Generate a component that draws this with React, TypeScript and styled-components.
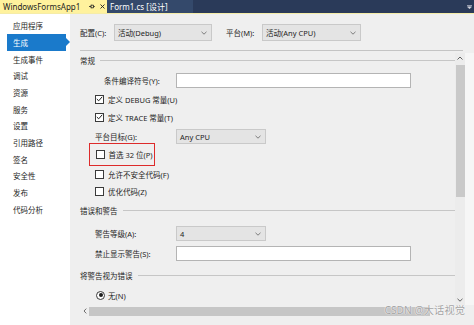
import React from "react";
import styled, { createGlobalStyle } from "styled-components";

const Global = createGlobalStyle`
  html, body { margin: 0; padding: 0; }
  body {
    width: 474px; height: 325px; overflow: hidden;
    font-family: "Noto Sans", "Noto Sans CJK SC", sans-serif;
    font-size: 7.5px; color: #1e1e1e; background: #efefef;
  }
  * { box-sizing: border-box; }
`;

const Window = styled.div`
  width: 474px; height: 325px; display: flex; flex-direction: column; position: relative;
`;

const TabBar = styled.div`
  height: 14px; flex: none; display: flex; align-items: stretch;
  background: #2a3a59; border-bottom: 1px solid #f5eca8;
`;

const Tab = styled.div<{ $active?: boolean; $w: number }>`
  width: ${(p) => p.$w}px; display: flex; align-items: center; padding-left: 3px;
  background: ${(p) => (p.$active ? "#fff29d" : "#34496b")};
  color: ${(p) => (p.$active ? "#1e1e1e" : "#ffffff")};
  font-size: 8px; white-space: nowrap;
`;

const TabTitle = styled.span`
  flex: none;
`;

const TabIcons = styled.span`
  display: flex; align-items: center; gap: 5px; margin-left: 9px;
`;

const TabFill = styled.div`
  flex: 1; display: flex; justify-content: flex-end; align-items: center; padding-right: 2px;
`;

const Body = styled.div`
  flex: 1; display: flex; min-height: 0;
`;

const Sidebar = styled.div`
  width: 70px; flex: none; background: #ffffff; padding-top: 3.3px; display: flex; flex-direction: column;
`;

const NavItem = styled.div<{ $selected?: boolean }>`
  position: relative; height: 16.7px; margin-left: 7px; width: 59px; padding-left: 6px;
  display: flex; align-items: center;
  background: ${(p) => (p.$selected ? "#1a7acb" : "transparent")};
  color: ${(p) => (p.$selected ? "#ffffff" : "#1e1e1e")};
  &::after {
    content: ""; display: ${(p) => (p.$selected ? "block" : "none")};
    position: absolute; right: -4px; top: 4.3px;
    border-left: 4px solid #1a7acb; border-top: 4px solid transparent; border-bottom: 4px solid transparent;
  }
`;

const Main = styled.div`
  flex: 1; display: flex; flex-direction: column; background: #efefef; min-width: 0; min-height: 0;
`;

const ConfigRow = styled.div`
  height: 17px; margin-top: 10px; padding-left: 10px; display: flex; align-items: center; flex: none;
`;

const ConfigLabel = styled.span<{ $w: number }>`
  width: ${(p) => p.$w}px; flex: none; white-space: nowrap;
`;

const SelectBox = styled.div<{ $w: number; $h: number }>`
  width: ${(p) => p.$w}px; height: ${(p) => p.$h}px; flex: none;
  background: #e4e4e4; border: 1px solid #c9c9c9;
  display: flex; align-items: center; justify-content: space-between;
  padding: 0 4px 0 3px; white-space: nowrap;
`;

const InputBox = styled.div<{ $w: number }>`
  width: ${(p) => p.$w}px; height: 15px; flex: none;
  background: #ffffff; border: 1px solid #b4b4b4;
`;

const Separator = styled.div`
  height: 1px; flex: none; background: #c4c4c4; margin: 9px 11px 0 10px;
`;

const ScrollRegion = styled.div`
  height: 252px; flex: none; display: flex; margin-top: 2px;
`;

const Content = styled.div`
  flex: 1; padding-left: 10px; overflow: hidden; display: flex; flex-direction: column;
`;

const Section = styled.div<{ $mt: number }>`
  height: 14px; margin-top: ${(p) => p.$mt}px; flex: none;
  display: flex; align-items: center; gap: 5px; white-space: nowrap;
  &::after { content: ""; flex: 1; height: 1px; background: #c6c6c6; }
`;

const Row = styled.div<{ $mt: number; $h: number; $indent: number }>`
  height: ${(p) => p.$h}px; margin-top: ${(p) => p.$mt}px; padding-left: ${(p) => p.$indent}px;
  flex: none; display: flex; align-items: center; white-space: nowrap;
`;

const FieldLabel = styled.span<{ $w: number }>`
  width: ${(p) => p.$w}px; flex: none;
`;

const Highlight = styled.div`
  width: 66px; height: 23px; margin: -1px 0 0 9px; flex: none;
  border: 1.5px solid #dd2b2b; display: flex; align-items: center; padding-left: 5.5px;
  white-space: nowrap;
`;

const Check = styled.span`
  width: 9px; height: 9px; flex: none; border: 1px solid #3a3a3a; background: #ffffff;
  margin-right: 4px; display: flex; align-items: center; justify-content: center;
`;

const Radio = styled.span`
  width: 9px; height: 9px; flex: none; border: 1px solid #3a3a3a; border-radius: 50%;
  background: #ffffff; margin-right: 3px; display: flex; align-items: center; justify-content: center;
  &::after { content: ""; width: 4px; height: 4px; border-radius: 50%; background: #1e1e1e; }
`;

const VScroll = styled.div`
  width: 10px; flex: none; display: flex; flex-direction: column; align-items: center;
  background: #ececec;
`;

const Arrow = styled.div`
  height: 10px; width: 10px; display: flex; align-items: center; justify-content: center; flex: none;
`;

const VThumb = styled.div`
  width: 9px; height: 132px; background: #c9c9c9; margin-top: 2px; flex: none;
`;

const VFill = styled.div`
  flex: 1;
`;

const Gutter = styled.div`
  width: 9px; flex: none; background: #f6f6f6;
`;

const HScrollRow = styled.div`
  height: 10px; display: flex; align-items: center; margin: 1px 19px 0 10px; flex: none;
`;

const HArrow = styled.div`
  width: 9px; height: 9px; display: flex; align-items: center; justify-content: center; flex: none;
`;

const HThumb = styled.div`
  width: 341px; height: 9px; background: #c6c6c6; flex: none;
`;

const Watermark = styled.div`
  position: absolute; right: 9px; bottom: 8px;
  font-size: 10.3px; color: #a4a4a4; white-space: nowrap;
  text-shadow: 0 0 1px #ffffff, 0 0 1px #ffffff;
`;

const Chevron = ({ up = false, color = "#707070" }: { up?: boolean; color?: string }) => (
  <svg width="6" height="4" viewBox="0 0 6 4">
    <path d={up ? "M0.5 3.5 L3 1 L5.5 3.5" : "M0.5 0.8 L3 3.2 L5.5 0.8"} fill="none" stroke={color} strokeWidth="0.9" />
  </svg>
);

const CheckMark = () => (
  <svg width="7" height="6" viewBox="0 0 7 6">
    <path d="M0.8 3 L2.7 4.8 L6.2 0.8" fill="none" stroke="#1e1e1e" strokeWidth="1" />
  </svg>
);

const Pin = () => (
  <svg width="6" height="5" viewBox="0 0 6 5">
    <path d="M0 2.5 H2 M2 0.8 V4.2 M2 1.2 H4.5 V3.8 H2 M4.5 2.5 H5.8" fill="none" stroke="#1e1e1e" strokeWidth="0.8" />
  </svg>
);

const Close = () => (
  <svg width="5" height="5" viewBox="0 0 5 5">
    <path d="M0.5 0.5 L4.5 4.5 M4.5 0.5 L0.5 4.5" fill="none" stroke="#1e1e1e" strokeWidth="0.9" />
  </svg>
);

const DropArrow = () => (
  <svg width="5" height="4" viewBox="0 0 5 4">
    <path d="M0 0.5 H5 M0.5 1.8 L2.5 3.8 L4.5 1.8 Z" fill="#d8d8e0" stroke="#d8d8e0" strokeWidth="0.6" />
  </svg>
);

const LeftArrow = () => (
  <svg width="4" height="6" viewBox="0 0 4 6">
    <path d="M3.3 0.6 L1 3 L3.3 5.4" fill="none" stroke="#606060" strokeWidth="0.9" />
  </svg>
);

const navItems = ["应用程序", "生成", "生成事件", "调试", "资源", "服务", "设置", "引用路径", "签名", "安全性", "发布", "代码分析"];

export default function App() {
  return (
    <>
      <Global />
      <Window>
        <TabBar>
          <Tab $active $w={107}>
            <TabTitle>WindowsFormsApp1</TabTitle>
            <TabIcons>
              <Pin />
              <Close />
            </TabIcons>
          </Tab>
          <Tab $w={86}>
            <TabTitle>Form1.cs [设计]</TabTitle>
          </Tab>
          <TabFill>
            <DropArrow />
          </TabFill>
        </TabBar>
        <Body>
          <Sidebar>
            {navItems.map((n) => (
              <NavItem key={n} $selected={n === "生成"}>{n}</NavItem>
            ))}
          </Sidebar>
          <Main>
            <ConfigRow>
              <ConfigLabel $w={34}>配置(C):</ConfigLabel>
              <SelectBox $w={98} $h={17}>
                <span>活动(Debug)</span>
                <Chevron />
              </SelectBox>
              <ConfigLabel $w={14} />
              <ConfigLabel $w={36}>平台(M):</ConfigLabel>
              <SelectBox $w={99} $h={17}>
                <span>活动(Any CPU)</span>
                <Chevron />
              </SelectBox>
            </ConfigRow>
            <Separator />
            <ScrollRegion>
              <Content>
                <Section $mt={0}>常规</Section>
                <Row $mt={6} $h={15} $indent={24}>
                  <FieldLabel $w={72}>条件编译符号(Y):</FieldLabel>
                  <InputBox $w={235} />
                </Row>
                <Row $mt={3} $h={16} $indent={15}>
                  <Check><CheckMark /></Check>定义 DEBUG 常量(U)
                </Row>
                <Row $mt={2} $h={16} $indent={15}>
                  <Check><CheckMark /></Check>定义 TRACE 常量(T)
                </Row>
                <Row $mt={4} $h={15} $indent={15}>
                  <FieldLabel $w={81}>平台目标(G):</FieldLabel>
                  <SelectBox $w={90} $h={15}>
                    <span>Any CPU</span>
                    <Chevron />
                  </SelectBox>
                </Row>
                <Highlight>
                  <Check />首选 32 位(P)
                </Highlight>
                <Row $mt={0} $h={16} $indent={15}>
                  <Check />允许不安全代码(F)
                </Row>
                <Row $mt={1} $h={16} $indent={15}>
                  <Check />优化代码(Z)
                </Row>
                <Section $mt={4}>错误和警告</Section>
                <Row $mt={9} $h={15} $indent={15}>
                  <FieldLabel $w={81}>警告等级(A):</FieldLabel>
                  <SelectBox $w={90} $h={15}>
                    <span>4</span>
                    <Chevron />
                  </SelectBox>
                </Row>
                <Row $mt={5} $h={15} $indent={15}>
                  <FieldLabel $w={81}>禁止显示警告(S):</FieldLabel>
                  <InputBox $w={235} />
                </Row>
                <Section $mt={7}>将警告视为错误</Section>
                <Row $mt={5} $h={16} $indent={16}>
                  <Radio />无(N)
                </Row>
              </Content>
              <VScroll>
                <Arrow><Chevron up color="#505050" /></Arrow>
                <VThumb />
                <VFill />
                <Arrow><Chevron color="#505050" /></Arrow>
              </VScroll>
              <Gutter />
            </ScrollRegion>
            <HScrollRow>
              <HArrow><LeftArrow /></HArrow>
              <HThumb />
            </HScrollRow>
          </Main>
        </Body>
        <Watermark>CSDN @大话视觉</Watermark>
      </Window>
    </>
  );
}
